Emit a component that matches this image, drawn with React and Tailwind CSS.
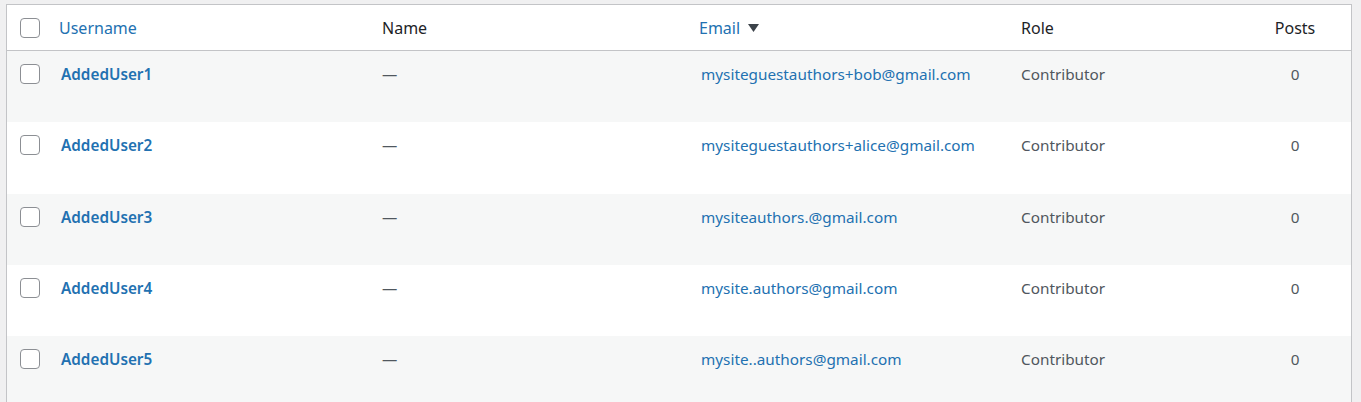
import React from "react";

const users = [
  { login: "AddedUser1", email: "mysiteguestauthors+bob@gmail.com" },
  { login: "AddedUser2", email: "mysiteguestauthors+alice@gmail.com" },
  { login: "AddedUser3", email: "mysiteauthors.@gmail.com" },
  { login: "AddedUser4", email: "mysite.authors@gmail.com" },
  { login: "AddedUser5", email: "mysite..authors@gmail.com" },
];

const cols = "grid grid-cols-[52px_323px_317px_322px_218px_112px]";

function Checkbox() {
  return (
    <span className="block w-[20px] h-[20px] rounded-[4px] border border-[#8c8f94] bg-white" />
  );
}

export default function App() {
  return (
    <div
      className="min-h-screen bg-[#f0f0f1] pt-[4px] pl-[6px] pr-[9px]"
      style={{ fontFamily: '"Noto Sans", "Open Sans", sans-serif' }}
    >
      <div className="border border-[#c3c4c7] bg-white text-[15.3px] leading-[20px]">
        {/* HEADER */}
        <div className={`${cols} h-[46px] border-b border-[#c3c4c7] items-center text-[16px]`}>
          <div className="pl-[13px]">
            <Checkbox />
          </div>
          <div className="text-[#2271b1]">Username</div>
          <div className="text-[#1d2327]">Name</div>
          <div className="flex items-center gap-[8px] text-[#2271b1]">
            Email
            <svg width="11" height="8" viewBox="0 0 11 8">
              <path d="M0 0 L11 0 L5.5 8 Z" fill="#3c434a" />
            </svg>
          </div>
          <div className="text-[#1d2327]">Role</div>
          <div className="text-center text-[#1d2327]">Posts</div>
        </div>

        {/* ROWS */}
        {users.map((u, i) => (
          <div
            key={u.login}
            className={`${cols} h-[71.25px] pt-[13px] items-start ${i % 2 === 0 ? "bg-[#f6f7f7]" : "bg-white"}`}
          >
            <div className="pl-[13px]">
              <Checkbox />
            </div>
            <div className="pl-[2px] font-semibold text-[#2271b1]">{u.login}</div>
            <div className="text-[#50575e]">—</div>
            <div className="pl-[2px] text-[#2271b1]">{u.email}</div>
            <div className="text-[#50575e]">Contributor</div>
            <div className="text-center text-[#50575e]">0</div>
          </div>
        ))}
      </div>
    </div>
  );
}
